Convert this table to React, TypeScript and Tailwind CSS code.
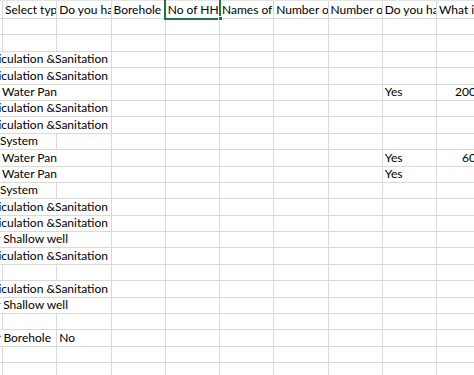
import clsx from 'clsx';
import type { ReactNode } from 'react';

const GRID = 'border-[#d9d9d9]';

const COL_W = [
  'w-[54.25px]',
  'w-[54.25px]',
  'w-[54.25px]',
  'w-[54.25px]',
  'w-[54.25px]',
  'w-[54.25px]',
  'w-[54.25px]',
  'w-[54.25px]',
  'w-[42px]',
];

const HEADERS = [
  'Select type of project',
  'Do you have a committee',
  'Borehole water source',
  'No of HH ,beneficiaries',
  'Names of the scheme',
  'Number of men',
  'Number of women',
  'Do you have a water permit',
  'What is the cost',
];

type SheetRow = {
  spill?: string;
  spillW?: string;
  cells?: Record<number, string>;
};

const SAN: SheetRow = { spill: 'Water Reticulation &Sanitation', spillW: 'w-[110px]' };
const PAN = { spill: 'Dam or Water Pan', spillW: 'w-[59px]' };
const SYS: SheetRow = { spill: 'Sewerage System', spillW: 'w-[40px]' };
const WELL: SheetRow = { spill: 'Spring or Shallow well', spillW: 'w-[70px]' };

const ROWS: SheetRow[] = [
  {},
  {},
  SAN,
  SAN,
  { ...PAN, cells: { 7: 'Yes', 8: '200' } },
  SAN,
  SAN,
  SYS,
  { ...PAN, cells: { 7: 'Yes', 8: '60' } },
  { ...PAN, cells: { 7: 'Yes' } },
  SYS,
  SAN,
  SAN,
  WELL,
  SAN,
  {},
  SAN,
  WELL,
  {},
  { spill: 'Well or Borehole', spillW: 'w-[53px]', cells: { 1: 'No' } },
  {},
  {},
];

function Cell({
  w,
  children,
  right,
  selected,
}: {
  w: string;
  children?: ReactNode;
  right?: boolean;
  selected?: boolean;
}) {
  return (
    <div className={clsx('relative h-full shrink-0 border-r', GRID, w)}>
      <div
        className={clsx(
          'flex h-full items-end overflow-hidden whitespace-nowrap px-[2px] pb-[1px]',
          right && 'justify-end',
        )}
      >
        {children}
      </div>
      {selected && (
        <div className="absolute -bottom-[1.5px] -left-[1.5px] -right-[2px] -top-[2px] z-20 border-2 border-t-0 border-[#217346]">
          <span className="absolute -bottom-[3.5px] -right-[3.5px] h-[5px] w-[5px] border border-white bg-[#217346]" />
        </div>
      )}
    </div>
  );
}

// the column left of "Select type" is scrolled off; only its last 3px show,
// and its text spills across the empty cells to the right
function SpillCell({ text, w }: { text?: string; w?: string }) {
  return (
    <div className={clsx('relative h-full w-[3px] shrink-0 border-r', GRID)}>
      {text && (
        <div className={clsx('relative z-10 flex h-full justify-end', w)}>
          <span className="flex h-full shrink-0 items-end whitespace-nowrap bg-white pb-[1px] pr-[2px]">
            {text}
          </span>
        </div>
      )}
    </div>
  );
}

export default function App() {
  return (
    <div className="h-[375px] w-[474px] overflow-hidden bg-white font-[Lato,sans-serif] text-[12px] leading-[14px] text-black">
      <div className={clsx('flex h-[19px] border-y', GRID, 'border-t-[#e4e4e4]')}>
        <SpillCell />
        {HEADERS.map((h, i) => (
          <Cell key={h} w={COL_W[i]} selected={i === 3}>
            {h}
          </Cell>
        ))}
      </div>

      {ROWS.map((row, r) => (
        <div key={r} className={clsx('flex h-[16.4px] border-b', GRID)}>
          <SpillCell text={row.spill} w={row.spillW} />
          {COL_W.map((w, i) => (
            <Cell key={i} w={w} right={i === 8}>
              {row.cells?.[i]}
            </Cell>
          ))}
        </div>
      ))}
    </div>
  );
}
